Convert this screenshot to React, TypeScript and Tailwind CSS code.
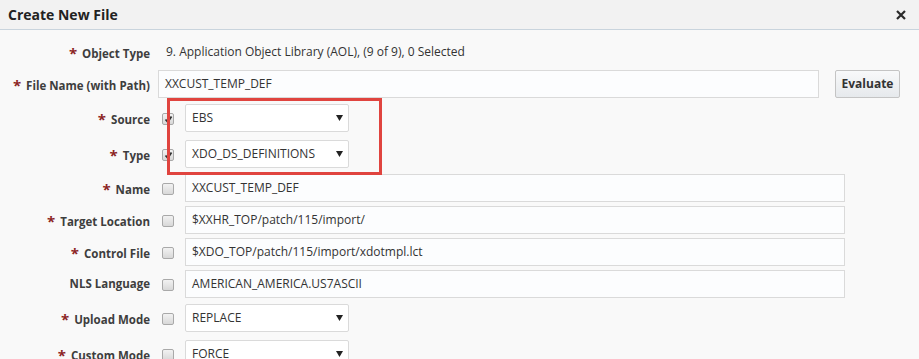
import React from 'react';

const font = { fontFamily: '"Open Sans", "Noto Sans", Arial, sans-serif' };

function Label({ text, required = true }: { text: string; required?: boolean }) {
  return (
    <div className="w-[150px] shrink-0 text-right text-[11.5px] font-bold text-[#3e3e3e] whitespace-nowrap">
      {required && <span className="text-[15px] text-[#8c2525] mr-[5px] relative top-[1px]">*</span>}
      {text}
    </div>
  );
}

function Check({ checked = false }: { checked?: boolean }) {
  return (
    <div className="ml-[12px] mt-[2px] w-[12px] h-[12px] shrink-0 rounded-[2px] border border-[#a9a9a9] bg-gradient-to-b from-[#f2f2f2] to-[#d8d8d8] flex items-center justify-center">
      {checked && (
        <svg width="9" height="9" viewBox="0 0 9 9">
          <path d="M1.5 4.5 L3.8 7 L7.5 1.5" stroke="#333" strokeWidth="1.8" fill="none" />
        </svg>
      )}
    </div>
  );
}

function TextBox({ value, w = 'w-[660px]', ml = 'ml-[11px]' }: { value: string; w?: string; ml?: string }) {
  return (
    <div className={`${ml} ${w} h-[28px] shrink-0 border border-[#dadada] bg-[#fcfdfe] flex items-center pl-[6px] text-[12px] text-[#333]`}>
      {value}
    </div>
  );
}

function Select({ value }: { value: string }) {
  return (
    <div className="ml-[11px] w-[164px] h-[28px] shrink-0 border border-[#dadada] bg-white rounded-[2px] flex items-center justify-between pl-[6px] pr-[5px] text-[12px] text-[#333]">
      <span>{value}</span>
      <svg width="7" height="6" viewBox="0 0 7 6">
        <path d="M0 0 H7 L3.5 6 Z" fill="#222" />
      </svg>
    </div>
  );
}

export default function App() {
  return (
    <div className="relative w-[919px] h-[359px] overflow-hidden bg-[#f9f9f9]" style={font}>
      <div className="h-[30px] bg-[#f2f2f2] border-b border-[#c9d4dd] flex items-center justify-between pl-[8px] pr-[13px]">
        <span className="text-[14px] font-bold text-[#222]">Create New File</span>
        <svg width="10" height="10" viewBox="0 0 10 10">
          <path d="M1 1 L9 9 M9 1 L1 9" stroke="#2a2a2a" strokeWidth="2.2" />
        </svg>
      </div>

      <div className="pt-[10px] flex flex-col">
        <div className="h-[24px] flex items-center">
          <Label text="Object Type" />
          <span className="ml-[16px] text-[12px] text-[#333]">9. Application Object Library (AOL), (9 of 9), 0 Selected</span>
        </div>
        <div className="mt-[6px] h-[28px] flex items-center">
          <Label text="File Name (with Path)" />
          <TextBox value="XXCUST_TEMP_DEF" w="w-[661px]" ml="ml-[8px]" />
          <button className="ml-[16px] w-[65px] h-[28px] rounded-[2px] border border-[#c4c4c4] bg-gradient-to-b from-[#f8f9fa] to-[#e6e9ec] text-[12px] font-bold text-[#333]">
            Evaluate
          </button>
        </div>
        <div className="mt-[6px] h-[28px] flex items-center">
          <Label text="Source" />
          <Check checked />
          <Select value="EBS" />
        </div>
        <div className="mt-[8px] h-[28px] flex items-center">
          <Label text="Type" />
          <Check checked />
          <Select value="XDO_DS_DEFINITIONS" />
        </div>
        <div className="mt-[6px] h-[28px] flex items-center">
          <Label text="Name" />
          <Check />
          <TextBox value="XXCUST_TEMP_DEF" />
        </div>
        <div className="mt-[4px] h-[28px] flex items-center">
          <Label text="Target Location" />
          <Check />
          <TextBox value="$XXHR_TOP/patch/115/import/" />
        </div>
        <div className="mt-[4px] h-[28px] flex items-center">
          <Label text="Control File" />
          <Check />
          <TextBox value="$XDO_TOP/patch/115/import/xdotmpl.lct" />
        </div>
        <div className="mt-[4px] h-[28px] flex items-center">
          <Label text="NLS Language" required={false} />
          <Check />
          <TextBox value="AMERICAN_AMERICA.US7ASCII" />
        </div>
        <div className="mt-[6px] h-[28px] flex items-center">
          <Label text="Upload Mode" />
          <Check />
          <Select value="REPLACE" />
        </div>
        <div className="mt-[8px] h-[28px] flex items-center">
          <Label text="Custom Mode" />
          <Check />
          <Select value="FORCE" />
        </div>
      </div>

      {/* annotation highlight */}
      <div className="absolute left-[167px] top-[98px] w-[215px] h-[77px] border-[3px] border-[#e0443f] pointer-events-none" />
    </div>
  );
}
